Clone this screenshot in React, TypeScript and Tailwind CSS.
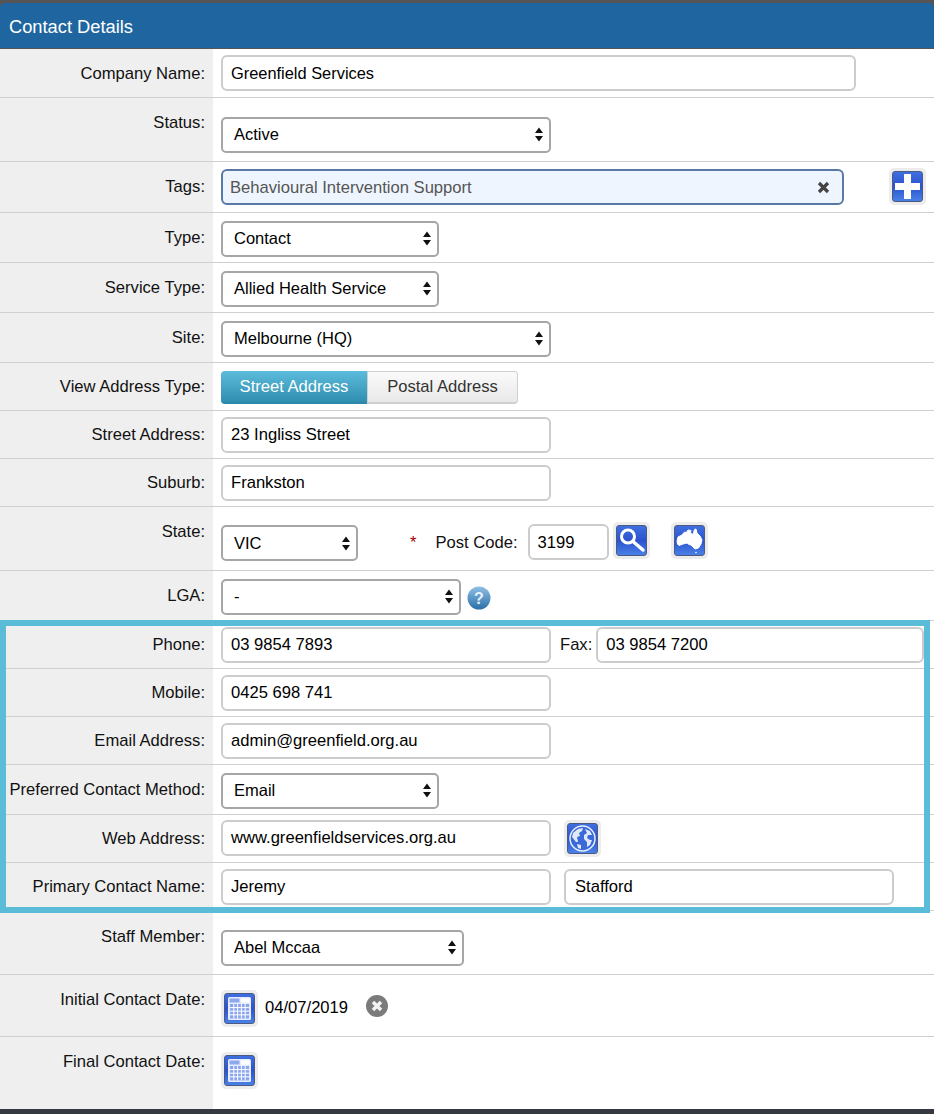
import React from "react";

const font = "font-['Liberation_Sans',Arial,sans-serif]";

const Row = ({ label, rowClass, labelClass, children }: { label?: string; rowClass: string; labelClass?: string; children?: React.ReactNode }) => (
  <div className={`flex border-b border-[#cfcfcf] ${rowClass}`}>
    <div className={`w-[213px] shrink-0 bg-[#efefef] pr-2 text-right leading-[22px] text-[#111] ${labelClass ?? "pt-[14px]"}`}>{label}</div>
    <div className="flex-1">{children}</div>
  </div>
);

const Input = ({ value, className }: { value: string; className: string }) => (
  <div className={`flex h-[36px] shrink-0 items-center rounded-[6px] border-2 border-[#cccccc] bg-white pl-2 text-black ${className}`}>{value}</div>
);

const Select = ({ value, className }: { value: string; className: string }) => (
  <div className={`flex h-[36px] shrink-0 items-center justify-between rounded-[5px] border-2 border-[#a6a6a6] bg-white pb-px pl-[11px] pr-[6px] text-[16.5px] text-black ${className}`}>
    <span>{value}</span>
    <svg width="8" height="15" viewBox="0 0 8 15">
      <path d="M4 0.500 8 6H0zM0 9h8l-4 5.500z" fill="#111" />
    </svg>
  </div>
);

const IconBtn = ({ className, children }: { className?: string; children: React.ReactNode }) => (
  <div className={`flex h-[37px] w-[37px] shrink-0 items-center justify-center rounded-[5px] bg-[#ececec] ${className ?? ""}`}>
    <div className="flex h-[31px] w-[31px] items-center justify-center rounded-[3px] border border-[#4a5a80] bg-linear-to-b from-[#3f6fe0] via-[#2c52cf] to-[#4a80e6]">
      {children}
    </div>
  </div>
);

const PlusIcon = () => (
  <svg width="29" height="29" viewBox="0 0 29 29">
    <path d="M11 2h7v9h9v7h-9v9h-7v-9H2v-7h9z" fill="#fff" />
  </svg>
);

const SearchIcon = () => (
  <svg width="29" height="29" viewBox="0 0 29 29" fill="none" stroke="#fff">
    <circle cx="11" cy="10.500" r="6.500" strokeWidth="3" />
    <path d="M16 15.500 26 24" strokeWidth="3.500" strokeLinecap="round" />
  </svg>
);

const MapIcon = () => (
  <svg width="29" height="29" viewBox="0 0 29 29">
    <path
      d="M2 15 L3 11 L7 9 L9 6.500 L12 6 L13 4 L16 4.500 L15.500 7 L18 8.500 L19.500 3.500 L21 3 L22 7 L25 10 L27 14 L26 18 L23.500 22 L20 23 L18 21 L16 19 L14 18.500 L12 17 L8 18 L4 19.500 L2.500 18 Z"
      fill="#fff"
      stroke="#fff"
      strokeWidth="1"
      strokeLinejoin="round"
    />
    <circle cx="21" cy="26.500" r="0.800" fill="#fff" />
  </svg>
);

const GlobeIcon = () => (
  <svg width="29" height="29" viewBox="0 0 29 29">
    <circle cx="14.500" cy="14.500" r="12.500" fill="#3a6ad8" stroke="#e8eefc" strokeWidth="1.500" />
    <path d="M5 9l5-4 5-1-1 3-3 2 1 3-3 1 1 5-2 0-4-5zM17 5l5 2 2 4-4 0-1 3 3 2 2 0-2 5-3 2 0-5-3-3 0-4 3-2zM9 20l4 1 0 4-3-1z" fill="#fff" fillOpacity="0.85" />
  </svg>
);

const CalendarIcon = () => (
  <svg width="29" height="29" viewBox="0 0 29 29">
    <rect x="3" y="3" width="23" height="23" rx="1.500" fill="#e6ecfc" />
    <rect x="4.500" y="4.500" width="10" height="4" fill="#8ea8ee" />
    <rect x="16" y="4.500" width="8.500" height="4" fill="#fff" />
    <rect x="5" y="10" width="19" height="14.500" fill="#8aa5ee" />
    <path d="M8.800 10v14.500M12.600 10v14.500M16.400 10v14.500M20.200 10v14.500M5 13.600h19M5 17.200h19M5 20.800h19" stroke="#fff" strokeWidth="1" />
  </svg>
);

export default function App() {
  return (
    <div className={`relative h-[1114px] w-[934px] overflow-hidden bg-[#343a40] text-[16.6px] ${font}`}>
      <div className="bg-[#555] pt-[3px]">
        <div className="flex h-[46px] items-center rounded-t-[5px] border-b border-[#555] bg-[#1f66a0] px-[9px] pt-[3px] text-[18.3px] text-white">Contact Details</div>
      </div>
      <div className="bg-white">
        <Row label="Company Name:" rowClass="h-[49px]">
          <div className="pl-2 pt-[6px]"><Input value="Greenfield Services" className="w-[635px] pt-px text-[16.4px]" /></div>
        </Row>
        <Row label="Status:" rowClass="h-[64px]">
          <div className="pl-2 pt-[19px]"><Select value="Active" className="w-[330px]" /></div>
        </Row>
        <Row label="Tags:" rowClass="h-[51px]">
          <div className="flex items-start pl-2 pt-[6px]">
            <div className="mt-px flex h-[36px] w-[623px] items-center justify-between rounded-[6px] border-2 border-[#5a7aa6] bg-[#eef5fe] pl-[7px] pr-[12px] text-[#555]">
              <span className="pt-[2px]">Behavioural Intervention Support</span>
              <svg width="13" height="13" viewBox="0 0 13 13">
                <path d="M2 2l9 9M11 2l-9 9" stroke="#444" strokeWidth="3.200" />
              </svg>
            </div>
            <IconBtn className="ml-[45px]"><PlusIcon /></IconBtn>
          </div>
        </Row>
        <Row label="Type:" rowClass="h-[50px]">
          <div className="pl-2 pt-2"><Select value="Contact" className="w-[218px]" /></div>
        </Row>
        <Row label="Service Type:" rowClass="h-[50px]">
          <div className="pl-2 pt-2"><Select value="Allied Health Service" className="w-[218px]" /></div>
        </Row>
        <Row label="Site:" rowClass="h-[50px]">
          <div className="pl-2 pt-2"><Select value="Melbourne (HQ)" className="w-[330px]" /></div>
        </Row>
        <Row label="View Address Type:" rowClass="h-[48px]" labelClass="pt-[13px]">
          <div className="flex pl-2 pt-2">
            <div className="flex h-[33px] w-[146px] items-center justify-center rounded-l-[4px] border-b-2 border-[#2d87a6] bg-linear-to-b from-[#5cbcdc] to-[#2f8fb0] pt-px text-white">Street Address</div>
            <div className="flex h-[33px] w-[151px] items-center justify-center rounded-r-[4px] border border-b-2 border-[#d0d0d0] bg-linear-to-b from-[#fafafa] to-[#e9e9e9] text-[#333]">Postal Address</div>
          </div>
        </Row>
        <Row label="Street Address:" rowClass="h-[48px]" labelClass="pt-[13px]">
          <div className="pl-2 pt-[6px]"><Input value="23 Ingliss Street" className="w-[330px]" /></div>
        </Row>
        <Row label="Suburb:" rowClass="h-[48px]" labelClass="pt-[13px]">
          <div className="pl-2 pt-[6px]"><Input value="Frankston" className="w-[330px]" /></div>
        </Row>
        <Row label="State:" rowClass="h-[64px]">
          <div className="flex items-start pl-2 pt-[15px]">
            <div className="mt-[3px]"><Select value="VIC" className="w-[137px] pt-px" /></div>
            <span className="ml-[52px] mt-[10px] leading-[22px] text-[#a00000]">*</span>
            <span className="ml-[19px] mt-[10px] leading-[22px] text-[#111]">Post Code:</span>
            <Input value="3199" className="ml-[10px] mt-[2px] w-[81px] pt-[2px]" />
            <IconBtn className="ml-[4px]"><SearchIcon /></IconBtn>
            <IconBtn className="ml-[21px]"><MapIcon /></IconBtn>
          </div>
        </Row>
        <Row label="LGA:" rowClass="h-[50px]">
          <div className="flex items-start pl-2 pt-2">
            <Select value="-" className="w-[240px]" />
            <svg className="ml-[6px] mt-[7px]" width="24" height="24" viewBox="0 0 24 24">
              <defs>
                <linearGradient id="help" x1="0" y1="0" x2="0" y2="1">
                  <stop offset="0" stopColor="#8fc0e6" />
                  <stop offset="1" stopColor="#2b6fa8" />
                </linearGradient>
              </defs>
              <circle cx="12" cy="12" r="11.500" fill="url(#help)" />
              <text x="12" y="17.500" textAnchor="middle" fontSize="16" fontWeight="700" fill="#e8f2fb" fontFamily="Liberation Sans">?</text>
            </svg>
          </div>
        </Row>
        <Row label="Phone:" rowClass="h-[48px]" labelClass="pt-[13px]">
          <div className="flex items-center pl-2 pt-[6px]">
            <Input value="03 9854 7893" className="w-[330px]" />
            <span className="ml-[9px] text-[#111]">Fax:</span>
            <Input value="03 9854 7200" className="ml-[4px] w-[328px]" />
          </div>
        </Row>
        <Row label="Mobile:" rowClass="h-[48px]" labelClass="pt-[13px]">
          <div className="pl-2 pt-[6px]"><Input value="0425 698 741" className="w-[330px]" /></div>
        </Row>
        <Row label="Email Address:" rowClass="h-[48px]" labelClass="pt-[13px]">
          <div className="pl-2 pt-[6px]"><Input value="admin@greenfield.org.au" className="w-[330px]" /></div>
        </Row>
        <Row label="Preferred Contact Method:" rowClass="h-[50px]">
          <div className="pl-2 pt-2"><Select value="Email" className="w-[218px]" /></div>
        </Row>
        <Row label="Web Address:" rowClass="h-[48px]" labelClass="pt-[13px]">
          <div className="flex items-start pl-2 pt-[5px]">
            <Input value="www.greenfieldservices.org.au" className="w-[330px]" />
            <IconBtn className="ml-[13px]"><GlobeIcon /></IconBtn>
          </div>
        </Row>
        <Row label="Primary Contact Name:" rowClass="h-[48px]" labelClass="pt-[13px]">
          <div className="flex gap-[13px] pl-2 pt-[6px]">
            <Input value="Jeremy" className="w-[330px]" />
            <Input value="Stafford" className="w-[330px] pl-[9px]" />
          </div>
        </Row>
        <Row label="Staff Member:" rowClass="h-[64px]" labelClass="pt-[15px]">
          <div className="pl-2 pt-[19px]"><Select value="Abel Mccaa" className="w-[243px]" /></div>
        </Row>
        <Row label="Initial Contact Date:" rowClass="h-[62px]">
          <div className="flex items-center pl-2 pt-[15px]">
            <IconBtn><CalendarIcon /></IconBtn>
            <span className="ml-[7px] -mt-px text-black">04/07/2019</span>
            <svg className="ml-[18px] -mt-[6px]" width="22" height="22" viewBox="0 0 22 22">
              <circle cx="11" cy="11" r="11" fill="#7b7b7b" />
              <path d="M7 7l8 8M15 7l-8 8" stroke="#f2f2f2" strokeWidth="3.500" />
            </svg>
          </div>
        </Row>
        <div className="flex h-[72px]">
          <div className="w-[213px] shrink-0 bg-[#efefef] pr-2 pt-[14px] text-right leading-[22px] text-[#111]">Final Contact Date:</div>
          <div className="pl-2 pt-[15px]"><IconBtn><CalendarIcon /></IconBtn></div>
        </div>
      </div>
      <div className="pointer-events-none absolute left-0 top-[620px] h-[293px] w-[930px] border-[6px] border-[#5bbcd8]" />
    </div>
  );
}
